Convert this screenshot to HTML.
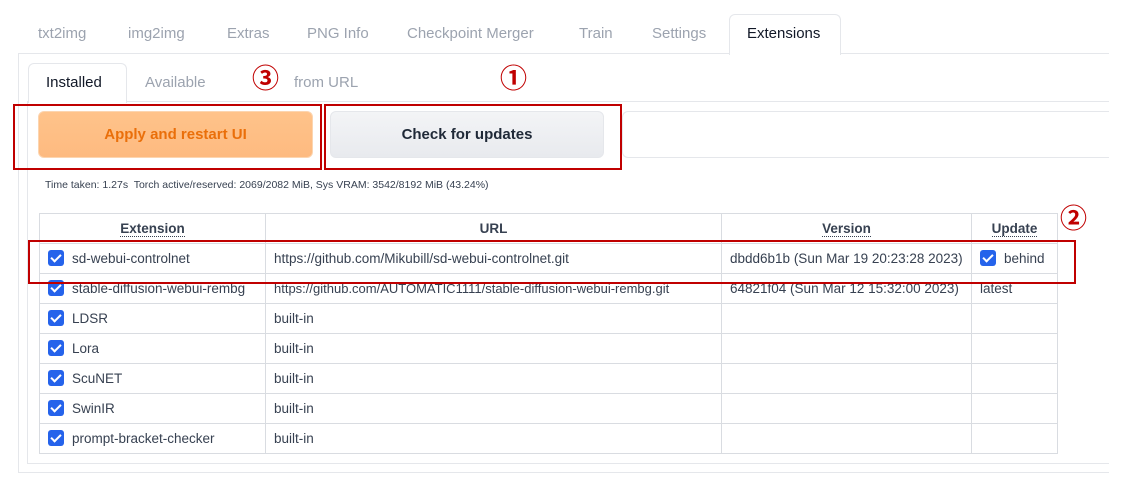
<!DOCTYPE html>
<html><head><meta charset="utf-8"><style>
*{box-sizing:border-box;margin:0;padding:0}
body{width:1121px;height:477px;background:#fff;font-family:"Liberation Sans",sans-serif;position:relative;overflow:hidden;color:#374151}
.a{position:absolute;white-space:nowrap}
.tab{top:25px;font-size:15px;color:#9ca3af}
.red{position:absolute;border:2px solid #c00000}
.num{position:absolute;color:#c00000;font-size:27px;line-height:27px;font-weight:bold;font-family:"Noto Sans CJK JP",sans-serif}
table{position:absolute;left:39px;top:213px;border-collapse:collapse;font-size:13.5px;color:#374151}
td,th{border:1px solid #d9dce1;height:30px;padding:0 8px;white-space:nowrap;vertical-align:middle;line-height:16px}
th{font-weight:bold;text-align:center}
th span{border-bottom:1px dotted #374151}
.cb{display:inline-block;width:16px;height:16px;background:#2563eb;border-radius:3px;vertical-align:-3px;margin-right:8px;position:relative}
.cb:after{content:"";position:absolute;left:5px;top:2px;width:4px;height:8px;border:solid #fff;border-width:0 2px 2px 0;transform:rotate(45deg)}
</style></head><body>
<div class="a tab" style="left:38px">txt2img</div>
<div class="a tab" style="left:128px">img2img</div>
<div class="a tab" style="left:227px">Extras</div>
<div class="a tab" style="left:307px">PNG Info</div>
<div class="a tab" style="left:407px">Checkpoint Merger</div>
<div class="a tab" style="left:579px">Train</div>
<div class="a tab" style="left:652px">Settings</div>
<div class="a" style="left:729px;top:14px;width:112px;height:41px;border:1px solid #e5e7eb;border-bottom:none;border-radius:6px 6px 0 0;background:#fff;z-index:2"></div>
<div class="a tab" style="left:747px;color:#111827;z-index:3">Extensions</div>
<div class="a" style="left:18px;top:53px;width:1091px;height:420px;border:1px solid #e5e7eb;border-right:none"></div>
<div class="a" style="left:28px;top:63px;width:99px;height:40px;border:1px solid #e5e7eb;border-bottom:none;border-radius:6px 6px 0 0;background:#fff;z-index:2"></div>
<div class="a" style="left:46px;top:74px;font-size:15px;color:#111827;z-index:3">Installed</div>
<div class="a" style="left:145px;top:74px;font-size:15px;color:#9ca3af">Available</div>
<div class="a" style="left:294px;top:74px;font-size:15px;color:#9ca3af">from URL</div>
<div class="a" style="left:27px;top:101px;width:1082px;height:363px;border:1px solid #e5e7eb;border-right:none"></div>
<div class="a" style="left:38px;top:111px;width:275px;height:47px;border-radius:6px;background:linear-gradient(#ffc38a,#fdba80);border:1px solid #fcd5b0;color:#ea6f0a;font-weight:bold;font-size:15px;text-align:center;line-height:45px">Apply and restart UI</div>
<div class="a" style="left:330px;top:111px;width:274px;height:47px;border-radius:6px;background:linear-gradient(#f3f4f6,#e8eaee);border:1px solid #e5e7eb;color:#1f2937;font-weight:bold;font-size:15px;text-align:center;line-height:45px">Check for updates</div>
<div class="a" style="left:622px;top:111px;width:487px;height:47px;border-radius:6px 0 0 6px;border:1px solid #e5e7eb;border-right:none"></div>
<div class="a" style="left:45px;top:179px;font-size:10.5px;color:#374151">Time taken: 1.27s&nbsp; Torch active/reserved: 2069/2082 MiB, Sys VRAM: 3542/8192 MiB (43.24%)</div>
<table>
<tr><th style="width:226px"><span>Extension</span></th><th style="width:456px">URL</th><th style="width:250px"><span>Version</span></th><th style="width:86px"><span>Update</span></th></tr>
<tr><td><i class="cb"></i>sd-webui-controlnet</td><td>https://github.com/Mikubill/sd-webui-controlnet.git</td><td>dbdd6b1b (Sun Mar 19 20:23:28 2023)</td><td><i class="cb"></i>behind</td></tr>
<tr><td><i class="cb"></i>stable-diffusion-webui-rembg</td><td style="font-size:13px">https://github.com/AUTOMATIC1111/stable-diffusion-webui-rembg.git</td><td>64821f04 (Sun Mar 12 15:32:00 2023)</td><td>latest</td></tr>
<tr><td><i class="cb"></i>LDSR</td><td>built-in</td><td></td><td></td></tr>
<tr><td><i class="cb"></i>Lora</td><td>built-in</td><td></td><td></td></tr>
<tr><td><i class="cb"></i>ScuNET</td><td>built-in</td><td></td><td></td></tr>
<tr><td><i class="cb"></i>SwinIR</td><td>built-in</td><td></td><td></td></tr>
<tr><td><i class="cb"></i>prompt-bracket-checker</td><td>built-in</td><td></td><td></td></tr>
</table>
<div class="red" style="left:13px;top:104px;width:309px;height:66px"></div>
<div class="red" style="left:324px;top:104px;width:298px;height:66px"></div>
<div class="red" style="left:28px;top:240px;width:1048px;height:44px"></div>
<div class="num" style="left:252px;top:63px">③</div>
<div class="num" style="left:500px;top:63px">①</div>
<div class="num" style="left:1060px;top:203px">②</div>
</body></html>
